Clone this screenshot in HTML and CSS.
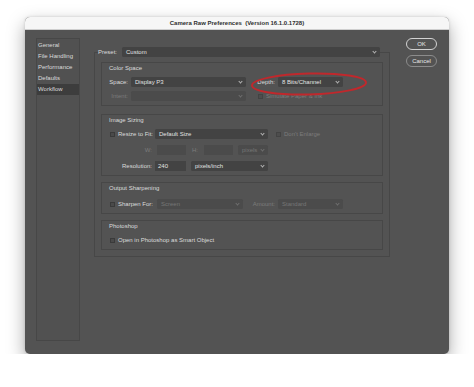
FILE: index.html
```html
<!DOCTYPE html>
<html lang="en">
<head>
    <meta charset="UTF-8">
    <meta name="viewport" content="width=device-width, initial-scale=1.0">
    <title>Camera Raw Preferences</title>
    <link rel="stylesheet" href="styles.css">
</head>
<body>
    <div class="window">
        <div class="titlebar">Camera Raw Preferences&nbsp; (Version 16.1.0.1728)</div>
        <div class="dialog">
            <ul class="sidebar">
                <li>General</li>
                <li>File Handling</li>
                <li>Performance</li>
                <li>Defaults</li>
                <li class="active">Workflow</li>
            </ul>

            <div class="main">
                <fieldset class="preset-box">
                    <legend class="preset-row">
                        <span class="preset-label">Preset:</span>
                        <span class="select preset-select">Custom</span>
                    </legend>

                    <!-- Color Space -->
                    <section class="group color-space">
                        <div class="group-title">Color Space</div>
                        <div class="row">
                            <span class="label lbl-space">Space:</span>
                            <span class="select sel-space">Display P3</span>
                            <span class="label lbl-depth">Depth:</span>
                            <span class="select sel-depth">8 Bits/Channel</span>
                        </div>
                        <div class="row">
                            <span class="label lbl-space dim">Intent:</span>
                            <span class="select sel-space disabled"></span>
                            <span class="check check-sim"></span>
                            <span class="check-text dim">Simulate Paper &amp; Ink</span>
                        </div>
                        <svg class="highlight" width="120" height="26" viewBox="0 0 120 26">
                            <ellipse cx="60" cy="13" rx="57" ry="10.5" transform="rotate(-1.5 60 13)"/>
                        </svg>
                    </section>

                    <!-- Image Sizing -->
                    <section class="group sizing">
                        <div class="group-title">Image Sizing</div>
                        <div class="row">
                            <span class="check"></span>
                            <span class="check-text lbl-fit">Resize to Fit:</span>
                            <span class="select sel-fit">Default Size</span>
                            <span class="check check-enlarge"></span>
                            <span class="check-text dim">Don't Enlarge</span>
                        </div>
                        <div class="row row-wide">
                            <span class="label lbl-res dim">W:</span>
                            <span class="field field-w disabled"></span>
                            <span class="label lbl-h dim">H:</span>
                            <span class="field field-h disabled"></span>
                            <span class="select sel-units disabled">pixels</span>
                        </div>
                        <div class="row row-wide">
                            <span class="label lbl-res">Resolution:</span>
                            <span class="field field-res">240</span>
                            <span class="select sel-ppi">pixels/inch</span>
                        </div>
                    </section>

                    <!-- Output Sharpening -->
                    <section class="group sharpening">
                        <div class="group-title">Output Sharpening</div>
                        <div class="row row-wide">
                            <span class="check"></span>
                            <span class="check-text lbl-sharpen">Sharpen For:</span>
                            <span class="select sel-screen disabled">Screen</span>
                            <span class="label lbl-amount dim">Amount:</span>
                            <span class="select sel-depth disabled">Standard</span>
                        </div>
                    </section>

                    <!-- Photoshop -->
                    <section class="group photoshop">
                        <div class="group-title">Photoshop</div>
                        <div class="row">
                            <span class="check"></span>
                            <span class="check-text">Open in Photoshop as Smart Object</span>
                        </div>
                    </section>
                </fieldset>
            </div>

            <div class="buttons">
                <button class="btn btn-default">OK</button>
                <button class="btn">Cancel</button>
            </div>
        </div>
    </div>
</body>
</html>
```

FILE: styles.css
```css
body {
    margin: 0;
    background-color: #ffffff;
    font-family: "Liberation Sans", Arial, sans-serif;
    font-size: 6px;
    color: #dcdcdc;
}
.window {
    width: 424px;
    height: 337px;
    margin: 17px 0 0 25px;
    border-radius: 5px;
    overflow: hidden;
    background-color: #535353;
    box-shadow: 0 7px 18px rgba(0, 0, 0, 0.35), 0 0 3px rgba(0, 0, 0, 0.15);
}
.titlebar {
    height: 13px;
    line-height: 13px;
    text-align: center;
    background-color: #f6f6f6;
    border-bottom: 1px solid #cfcfcf;
    box-sizing: border-box;
    color: #2e2e2e;
    font-weight: bold;
}
.dialog {
    display: flex;
    padding: 8px 12px 13px 11px;
    height: 324px;
    box-sizing: border-box;
}
.sidebar {
    list-style: none;
    margin: 0;
    padding: 1px 0 0 0;
    width: 44px;
    flex-shrink: 0;
    border: 1px solid #474747;
    background-color: #515151;
    box-sizing: border-box;
}
.sidebar li {
    height: 11px;
    line-height: 11px;
    padding-left: 1px;
    white-space: nowrap;
}
.sidebar li.active {
    background-color: #3d3d3d;
}
.main {
    width: 296px;
    margin-left: 14px;
    padding-top: 9px;
    flex-shrink: 0;
}
.preset-box {
    margin: 0;
    padding: 5px 6px 6px 6px;
    border: 1px solid #474747;
    min-width: 0;
}
.preset-row {
    display: flex;
    align-items: center;
    padding: 0;
    margin-left: -3px;
    width: 282px;
    height: 10px;
}
.preset-label {
    width: 24px;
}
.preset-select {
    width: 258px;
}
.group {
    position: relative;
    border: 1px solid #474747;
    padding: 1px 6px 4px 6px;
}
.sizing {
    margin-top: 8px;
}
.sharpening,
.photoshop {
    margin-top: 6px;
}
.group-title {
    height: 9px;
    line-height: 9px;
    padding-left: 1px;
}
.row {
    display: flex;
    align-items: center;
    height: 10px;
    margin-top: 4px;
    white-space: nowrap;
}
.row-wide {
    margin-top: 6px;
}
.label {
    text-align: right;
    flex-shrink: 0;
}
.dim {
    color: #7c7c7c;
}
.lbl-space {
    width: 20px;
}
.lbl-depth {
    width: 19px;
    margin-left: 10px;
}
.lbl-res {
    width: 44px;
}
.lbl-h {
    margin-left: 6px;
}
.lbl-amount {
    width: 23px;
    margin-left: 9px;
}
.select {
    position: relative;
    display: flex;
    align-items: center;
    height: 10px;
    padding-left: 4px;
    box-sizing: border-box;
    background-color: #434343;
    border-radius: 1.5px;
    color: #e2e2e2;
    flex-shrink: 0;
}
.select::after {
    content: "";
    position: absolute;
    right: 4px;
    top: 3px;
    width: 2px;
    height: 2px;
    border-right: 1px solid #b4b4b4;
    border-bottom: 1px solid #b4b4b4;
    transform: rotate(45deg);
}
.select.disabled,
.field.disabled {
    background-color: #4b4b4b;
    color: #767676;
}
.select.disabled::after {
    border-color: #6e6e6e;
}
.sel-space {
    width: 115px;
    margin-left: 3px;
}
.sel-depth {
    width: 65px;
    margin-left: 3px;
}
.sel-fit {
    width: 113px;
    margin-left: 3px;
}
.sel-units {
    width: 30px;
    margin-left: 5px;
}
.sel-ppi {
    width: 77px;
    margin-left: 5px;
}
.sel-screen {
    width: 86px;
    margin-left: 3px;
}
.field {
    height: 10px;
    line-height: 10px;
    padding-left: 3px;
    box-sizing: border-box;
    background-color: #434343;
    color: #e2e2e2;
    flex-shrink: 0;
}
.field-w {
    width: 29px;
    margin-left: 5px;
}
.field-h {
    width: 29px;
    margin-left: 6px;
}
.field-res {
    width: 31px;
    margin-left: 3px;
}
.check {
    width: 5px;
    height: 5px;
    margin-left: 2px;
    flex-shrink: 0;
    background-color: #4a4a4a;
    border: 1px solid #3a3a3a;
    box-sizing: border-box;
}
.check-sim {
    margin-left: 12px;
    opacity: 0.6;
}
.check-enlarge {
    margin-left: 8px;
    opacity: 0.6;
}
.check-text {
    margin-left: 3px;
}
.lbl-fit {
    width: 34px;
}
.lbl-sharpen {
    width: 36px;
}
.highlight {
    position: absolute;
    left: 147px;
    top: 8px;
    fill: none;
    stroke: #c0282c;
    stroke-width: 2;
}
.buttons {
    display: flex;
    flex-direction: column;
    gap: 5px;
    margin-left: 16px;
}
.btn {
    width: 31px;
    height: 12px;
    padding: 0;
    border-radius: 6px;
    border: 1px solid #8c8c8c;
    background-color: #535353;
    color: #e6e6e6;
    font-family: inherit;
    font-size: 6px;
}
.btn-default {
    border: 1.5px solid #d2d2d2;
}
```
